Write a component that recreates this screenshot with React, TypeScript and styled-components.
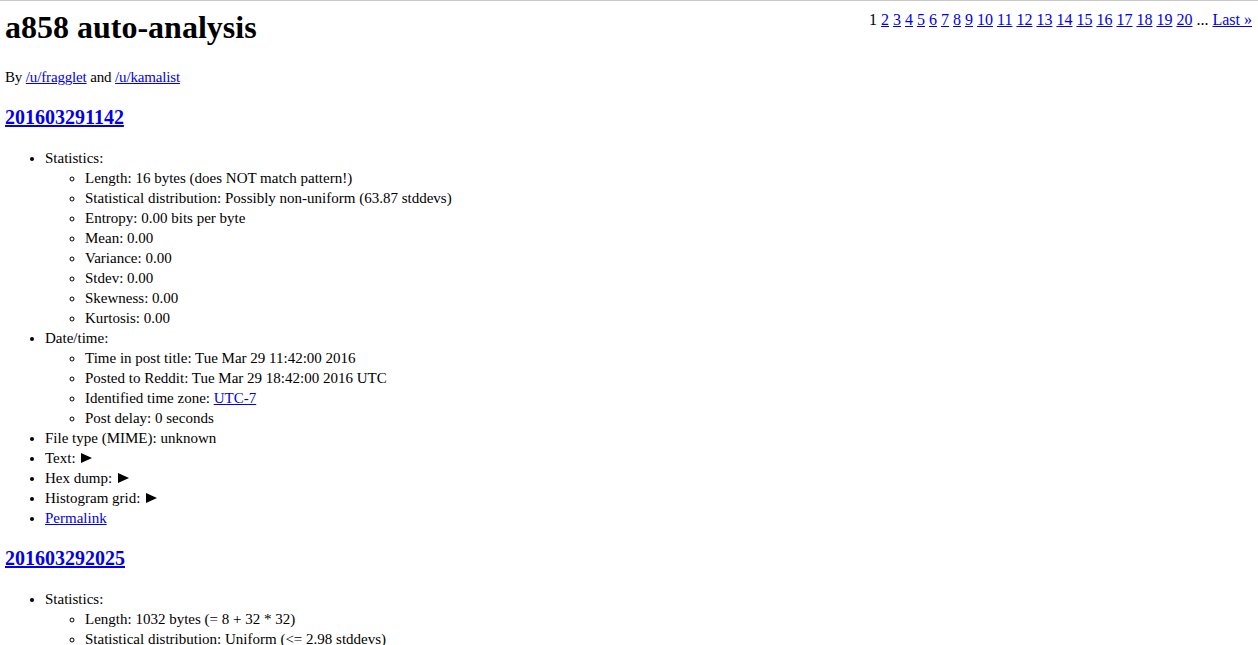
import styled, { createGlobalStyle } from 'styled-components'

const GlobalStyle = createGlobalStyle`
  html {
    border-top: 1px solid #c8c8c8;
  }
  body {
    margin: 0;
    padding: 5px;
    background: #ffffff;
    color: #000000;
    font-family: 'Liberation Serif', 'Times New Roman', serif;
    font-size: 15px;
    line-height: 20px;
  }
  a {
    color: #0000ee;
  }
`

const Pager = styled.div`
  float: right;
  margin-top: 1px;
  margin-right: 1px;
  font-size: 16px;
`

const PageLink = styled.a`
  margin-left: 4px;
`

const Title = styled.h1`
  font-size: 32px;
  line-height: 37px;
  margin: 3px 0 21px;
`

const Byline = styled.p`
  margin: 0 0 20px;
  letter-spacing: -0.15px;
`

const EntryTitle = styled.h2`
  font-size: 20px;
  line-height: 21px;
  margin: 20px 0;
`

const List = styled.ul<{ $sub?: boolean }>`
  margin: ${(p) => (p.$sub ? '0' : '0 0 20px')};
  padding-left: 40px;
  list-style-type: ${(p) => (p.$sub ? 'circle' : 'disc')};
`

const Toggle = styled.span`
  display: inline-block;
  width: 0;
  height: 0;
  margin-left: 2px;
  border-left: 11px solid #000000;
  border-top: 5px solid transparent;
  border-bottom: 5px solid transparent;
  vertical-align: 0;
`

type Item = { label: string; link?: string; children?: Item[]; toggle?: boolean }

const entries: { id: string; items: Item[] }[] = [
  {
    id: '201603291142',
    items: [
      {
        label: 'Statistics:',
        children: [
          { label: 'Length: 16 bytes (does NOT match pattern!)' },
          { label: 'Statistical distribution: Possibly non-uniform (63.87 stddevs)' },
          { label: 'Entropy: 0.00 bits per byte' },
          { label: 'Mean: 0.00' },
          { label: 'Variance: 0.00' },
          { label: 'Stdev: 0.00' },
          { label: 'Skewness: 0.00' },
          { label: 'Kurtosis: 0.00' },
        ],
      },
      {
        label: 'Date/time:',
        children: [
          { label: 'Time in post title: Tue Mar 29 11:42:00 2016' },
          { label: 'Posted to Reddit: Tue Mar 29 18:42:00 2016 UTC' },
          { label: 'Identified time zone: ', link: 'UTC-7' },
          { label: 'Post delay: 0 seconds' },
        ],
      },
      { label: 'File type (MIME): unknown' },
      { label: 'Text: ', toggle: true },
      { label: 'Hex dump: ', toggle: true },
      { label: 'Histogram grid: ', toggle: true },
      { label: '', link: 'Permalink' },
    ],
  },
  {
    id: '201603292025',
    items: [
      {
        label: 'Statistics:',
        children: [
          { label: 'Length: 1032 bytes (= 8 + 32 * 32)' },
          { label: 'Statistical distribution: Uniform (<= 2.98 stddevs)' },
        ],
      },
    ],
  },
]

const renderItem = (item: Item, i: number) => (
  <li key={i}>
    {item.label}
    {item.link && <a href="#">{item.link}</a>}
    {item.toggle && <Toggle />}
    {item.children && (
      <List $sub>
        {item.children.map(renderItem)}
      </List>
    )}
  </li>
)

const pages = Array.from({ length: 19 }, (_, i) => i + 2)

const App = () => {
  return (
    <>
      <GlobalStyle />
      <Pager>
        {'1'}
        {pages.map((n) => (
          <PageLink key={n} href="#">{n}</PageLink>
        ))}
        {' ... '}
        <a href="#">{'Last »'}</a>
      </Pager>
      <Title>{'a858 auto-analysis'}</Title>
      <Byline>
        {'By '}<a href="#">{'/u/fragglet'}</a>{' and '}<a href="#">{'/u/kamalist'}</a>
      </Byline>
      {entries.map((entry) => (
        <div key={entry.id}>
          <EntryTitle>
            <a href="#">{entry.id}</a>
          </EntryTitle>
          <List>{entry.items.map(renderItem)}</List>
        </div>
      ))}
    </>
  )
}

export default App
